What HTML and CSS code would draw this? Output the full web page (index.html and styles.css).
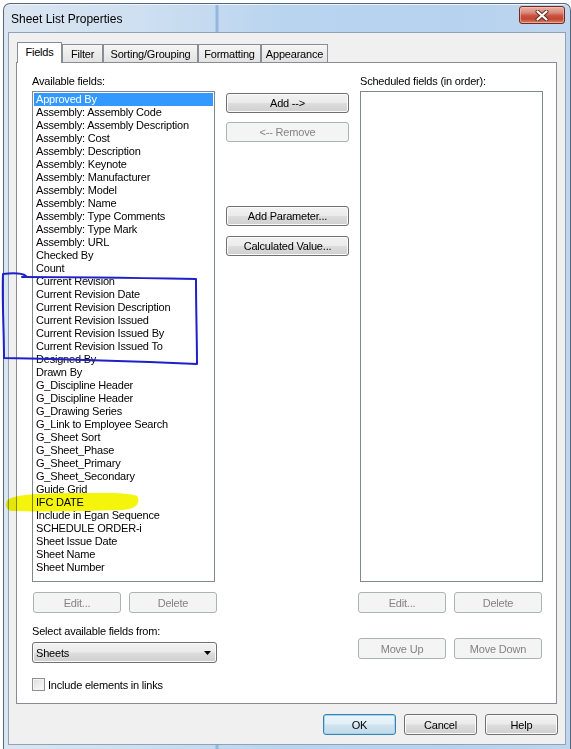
FILE: index.html
```html
<!DOCTYPE html>
<html>
<head>
<meta charset="utf-8">
<title>Sheet List Properties</title>
<link rel="stylesheet" href="styles.css">
</head>
<body>
<div class="window">
  <div class="titlebar">
    <span class="title">Sheet List Properties</span>
    <div class="close">
      <svg width="14" height="11" viewBox="0 0 14 11">
        <path d="M2.5 1.5 L11.5 9.5 M11.5 1.5 L2.5 9.5" stroke="#5b2a24" stroke-width="4" stroke-linecap="round"/>
        <path d="M2.5 1.5 L11.5 9.5 M11.5 1.5 L2.5 9.5" stroke="#ffffff" stroke-width="2.2" stroke-linecap="round"/>
      </svg>
    </div>
  </div>
  <div class="client">
    <div class="tabs">
      <div class="tab active t-fields">Fields</div>
      <div class="tab t-filter">Filter</div>
      <div class="tab t-sort">Sorting/Grouping</div>
      <div class="tab t-format">Formatting</div>
      <div class="tab t-appear">Appearance</div>
    </div>
    <div class="panel">
      <div class="col col-left">
        <div class="label">Available fields:</div>
        <div class="listbox">
          <div class="item selected">Approved By</div>
          <div class="item">Assembly: Assembly Code</div>
          <div class="item">Assembly: Assembly Description</div>
          <div class="item">Assembly: Cost</div>
          <div class="item">Assembly: Description</div>
          <div class="item">Assembly: Keynote</div>
          <div class="item">Assembly: Manufacturer</div>
          <div class="item">Assembly: Model</div>
          <div class="item">Assembly: Name</div>
          <div class="item">Assembly: Type Comments</div>
          <div class="item">Assembly: Type Mark</div>
          <div class="item">Assembly: URL</div>
          <div class="item">Checked By</div>
          <div class="item">Count</div>
          <div class="item">Current Revision</div>
          <div class="item">Current Revision Date</div>
          <div class="item">Current Revision Description</div>
          <div class="item">Current Revision Issued</div>
          <div class="item">Current Revision Issued By</div>
          <div class="item">Current Revision Issued To</div>
          <div class="item">Designed By</div>
          <div class="item">Drawn By</div>
          <div class="item">G_Discipline Header</div>
          <div class="item">G_Discipline Header</div>
          <div class="item">G_Drawing Series</div>
          <div class="item">G_Link to Employee Search</div>
          <div class="item">G_Sheet Sort</div>
          <div class="item">G_Sheet_Phase</div>
          <div class="item">G_Sheet_Primary</div>
          <div class="item">G_Sheet_Secondary</div>
          <div class="item">Guide Grid</div>
          <div class="item">IFC DATE</div>
          <div class="item">Include in Egan Sequence</div>
          <div class="item">SCHEDULE ORDER-i</div>
          <div class="item">Sheet Issue Date</div>
          <div class="item">Sheet Name</div>
          <div class="item">Sheet Number</div>
        </div>
        <div class="btnrow btnrow-left">
          <div class="btn disabled small">Edit...</div>
          <div class="btn disabled small">Delete</div>
        </div>
        <div class="label label-select">Select available fields from:</div>
        <div class="combo">
          <span>Sheets</span>
          <svg class="arrow" width="7" height="4" viewBox="0 0 7 4"><path d="M0 0 H7 L3.5 4 Z" fill="#000"/></svg>
        </div>
        <div class="check">
          <span class="box"></span>
          <span>Include elements in links</span>
        </div>
      </div>
      <div class="col col-mid">
        <div class="btn wide b-add">Add --&gt;</div>
        <div class="btn wide disabled b-remove">&lt;-- Remove</div>
        <div class="btn wide b-param">Add Parameter...</div>
        <div class="btn wide b-calc">Calculated Value...</div>
      </div>
      <div class="col col-right">
        <div class="label label-right">Scheduled fields (in order):</div>
        <div class="listbox listbox-right"></div>
        <div class="btnrow">
          <div class="btn disabled small">Edit...</div>
          <div class="btn disabled small">Delete</div>
        </div>
        <div class="btnrow btnrow-move">
          <div class="btn disabled small">Move Up</div>
          <div class="btn disabled small">Move Down</div>
        </div>
      </div>
    </div>
    <div class="footer">
      <div class="btn foot default">OK</div>
      <div class="btn foot">Cancel</div>
      <div class="btn foot">Help</div>
    </div>
  </div>
</div>
<svg class="annot" width="571" height="749" viewBox="0 0 571 749">
  <path class="hl" d="M7 501 C9 495 40 493 72 493 C102 493 128 492 137 496 C141 502 137 509 122 510 C84 511 42 512 11 511 C6 509 5 505 7 501 Z"/>
  <path class="pen" d="M26 276 C22 273 12 273 3 274 C2 300 4 330 4 358 C60 359 130 361 197 364 C197 340 196 310 196 279 C140 278 80 277 22 277"/>
</svg>
</body>
</html>
```

FILE: styles.css
```css
* { box-sizing: border-box; }

html, body {
  margin: 0;
  padding: 0;
}

body {
  width: 571px;
  height: 749px;
  overflow: hidden;
  position: relative;
  background: #ffffff;
  font-family: "Liberation Sans", Arial, sans-serif;
  font-size: 11px;
  letter-spacing: -0.2px;
  color: #000;
}

.window {
  margin: 3px 0 0 3px;
  width: 568px;
  height: 750px;
  border: 1px solid #56677c;
  border-bottom: none;
  border-radius: 7px 7px 0 0;
  padding: 0 4px;
  display: flex;
  flex-direction: column;
  background:
    linear-gradient(90deg, transparent 211px, rgba(90,140,195,0.45) 212px, rgba(90,140,195,0.45) 214px, transparent 215px),
    linear-gradient(90deg, #dbe6f1 0%, #cddff1 25%, #b9d4ef 50%, #b6d2ef 80%, #bfd6ee 100%);
  box-shadow: inset 0 1px 0 #eef4fa;
}

.titlebar {
  height: 28px;
  display: flex;
  align-items: center;
  flex: none;
}

.title {
  margin-left: 3px;
  font-size: 12px;
  letter-spacing: 0;
  color: #000;
  padding-top: 1px;
}

.close {
  margin-left: auto;
  margin-right: 1px;
  align-self: flex-start;
  margin-top: 2px;
  width: 46px;
  height: 18px;
  border: 1px solid #6f2a22;
  border-radius: 3px;
  background: linear-gradient(180deg, #eab3a6 0%, #d98a7b 35%, #c8523f 55%, #c24632 75%, #d5866c 100%);
  box-shadow: inset 0 0 0 1px rgba(255,200,190,0.55);
  display: flex;
  align-items: center;
  justify-content: center;
}

.client {
  width: 558px;
  height: 713px;
  flex: none;
  border: 1px solid #8ea3ba;
  background: #f0f0f0;
  display: flex;
  flex-direction: column;
}

.tabs {
  display: flex;
  align-items: flex-end;
  height: 20px;
  margin-top: 9px;
  padding-left: 8px;
  flex: none;
}

.tab {
  height: 18px;
  border: 1px solid #898c95;
  border-bottom: none;
  background: linear-gradient(180deg, #f6f6f6 0%, #ececec 50%, #e2e2e2 100%);
  text-align: center;
  line-height: 17px;
  padding-top: 1px;
  margin-right: 0;
}

.tab + .tab { margin-left: 0; }

.tab.active {
  height: 21px;
  background: #ffffff;
  margin-bottom: -1px;
  position: relative;
  z-index: 1;
  line-height: 18px;
  padding-top: 0;
  border-radius: 1px 1px 0 0;
}

.t-fields { width: 45px; }
.t-filter { width: 41px; }
.t-sort { width: 95px; margin-left: 1px; }
.t-format { width: 63px; margin-left: 1px; }
.t-appear { width: 67px; margin-left: 1px; }

.panel {
  margin-left: 7px;
  width: 541px;
  height: 642px;
  border: 1px solid #898c95;
  background: #ffffff;
  display: flex;
  padding-left: 15px;
  flex: none;
}

.col {
  display: flex;
  flex-direction: column;
}

.col-left { width: 186px; padding-top: 12px; }
.col-mid { width: 123px; margin-left: 8px; padding-top: 30px; }
.col-right { width: 185px; margin-left: 9px; padding-top: 12px; }

.label {
  height: 13px;
  line-height: 13px;
  white-space: nowrap;
}

.label-right { margin-left: 2px; }

.listbox {
  margin-top: 3px;
  width: 183px;
  height: 491px;
  border: 1px solid #828790;
  background: #fff;
  padding: 1px;
  overflow: hidden;
}

.listbox-right { margin-left: 2px; }

.item {
  height: 13px;
  line-height: 13px;
  padding-left: 2px;
  white-space: nowrap;
}

.item.selected {
  background: #3399ff;
  color: #ffffff;
}

.btn {
  height: 20px;
  border: 1px solid #707070;
  border-radius: 3px;
  background: linear-gradient(180deg, #f2f2f2 0%, #ebebeb 48%, #dddddd 52%, #cfcfcf 100%);
  box-shadow: inset 0 0 0 1px #fbfbfb;
  display: flex;
  align-items: center;
  justify-content: center;
  white-space: nowrap;
  flex: none;
}

.btn.disabled {
  border-color: #adb2b5;
  background: #f4f4f4;
  box-shadow: none;
  color: #838383;
}

.btnrow {
  display: flex;
  gap: 8px;
  margin-top: 10px;
}

.btnrow-left { padding-left: 1px; }
.btnrow .btn { height: 21px; }
.btn.small { width: 88px; }

.btnrow-move { margin-top: 25px; }

.wide { width: 123px; }
.b-remove { margin-top: 9px; }
.b-param { margin-top: 64px; }
.b-calc { margin-top: 10px; }

.label-select { margin-top: 12px; }

.combo {
  margin-top: 4px;
  width: 185px;
  height: 21px;
  border: 1px solid #707070;
  border-radius: 3px;
  background: linear-gradient(180deg, #f2f2f2 0%, #ebebeb 48%, #dddddd 52%, #cfcfcf 100%);
  box-shadow: inset 0 0 0 1px #fbfbfb;
  display: flex;
  align-items: center;
  padding-left: 3px;
  padding-right: 5px;
}

.combo .arrow { margin-left: auto; }

.check {
  margin-top: 15px;
  display: flex;
  align-items: center;
  gap: 3px;
  height: 13px;
  white-space: nowrap;
}

.check .box {
  width: 13px;
  height: 13px;
  border: 1px solid #8e8f8f;
  background: linear-gradient(135deg, #dcdcdc 0%, #f0f0f0 60%, #fbfbfb 100%);
  box-shadow: inset 0 0 0 1px #f4f4f4;
  flex: none;
}

.footer {
  display: flex;
  justify-content: flex-end;
  gap: 8px;
  margin-top: 10px;
  padding-right: 7px;
}

.btn.foot {
  width: 73px;
  height: 21px;
}

.btn.default {
  border-color: #3c7fb1;
  box-shadow: inset 0 0 0 1px #9fd7f3;
  background: linear-gradient(180deg, #eaf5fb 0%, #e2eff7 48%, #d0e4f0 52%, #c3d9e8 100%);
}

.annot {
  position: absolute;
  left: 0;
  top: 0;
  pointer-events: none;
}

.annot .hl {
  fill: #f4f40c;
  mix-blend-mode: multiply;
}

.annot .pen {
  fill: none;
  stroke: #2020c8;
  stroke-width: 2;
  stroke-linejoin: round;
  stroke-linecap: round;
}
```
